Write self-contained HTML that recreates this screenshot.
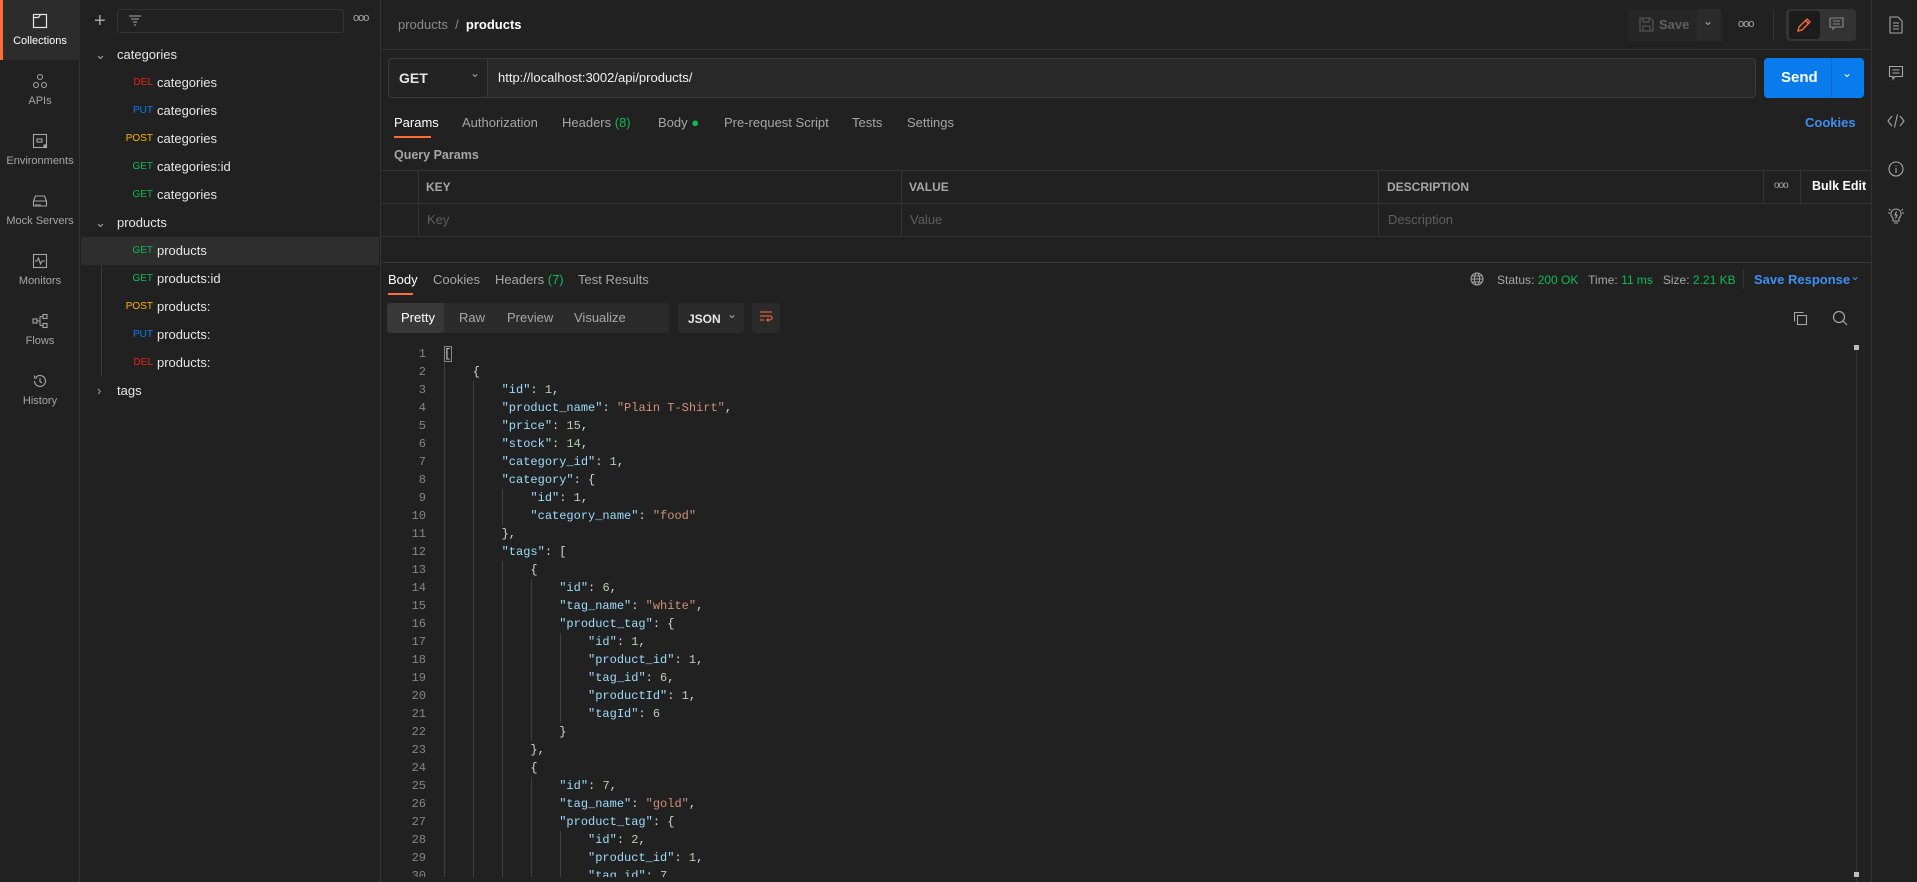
<!DOCTYPE html>
<html><head><meta charset="utf-8"><style>
*{box-sizing:border-box;margin:0;padding:0}
body{width:1917px;height:882px;background:#212121;font-family:"Liberation Sans",sans-serif;color:#a6a6a6;font-size:13px;position:relative;overflow:hidden}
.a{position:absolute;white-space:nowrap}
.nav{position:absolute;left:0;width:80px;text-align:center;font-size:11px;color:#a6a6a6}
.nav svg{display:block;margin:0 auto 6px}
.tree{position:absolute;left:81px;width:298px;height:28px;line-height:28px;font-size:13px;color:#e6e6e6}
.m{position:absolute;right:226px;font-size:10px;top:0}
.nm{position:absolute;left:76px}
.get{color:#0cbb52}.put{color:#097bed}.post{color:#ffb400}.del{color:#eb2013}
.ln{position:absolute;left:390px;width:36px;text-align:right;font-family:"Liberation Mono",monospace;font-size:12px;color:#858585;line-height:18px}
.code{position:absolute;left:444px;top:345px;font-family:"Liberation Mono",monospace;font-size:12px;color:#d4d4d4;white-space:pre;line-height:18px}
.k{color:#9cdcfe}.s{color:#ce9178}.n{color:#b5cea8}
.g{position:absolute;width:1px;background:#404040}
.hl{position:absolute;height:1px;background:#333}
.vl{position:absolute;width:1px;background:#333}
</style></head><body>
<div class="a" style="left:0;top:0;width:80px;height:882px;border-right:1px solid #333"></div>
<div class="a" style="left:0;top:0;width:80px;height:60px;background:#2c2c2c;border-left:3px solid #ff6c37"></div>
<div class="nav" style="top:13px;color:#fff"><svg width="16" height="16" viewBox="0 0 16 16" fill="none" stroke="#e6e6e6" stroke-width="1.2"><rect x="1.5" y="1.5" width="13" height="13"/><path d="M1.5 4.5h5l2-3"/></svg>Collections</div>
<div class="nav" style="top:73px"><svg width="16" height="16" viewBox="0 0 16 16" fill="none" stroke="#a6a6a6" stroke-width="1.1"><circle cx="8" cy="4" r="2.5"/><circle cx="4" cy="12" r="2.5"/><circle cx="12" cy="12" r="2.5"/></svg>APIs</div>
<div class="nav" style="top:133px"><svg width="16" height="16" viewBox="0 0 16 16" fill="none" stroke="#a6a6a6" stroke-width="1.1"><rect x="1.5" y="1.5" width="13" height="13"/><rect x="5" y="6" width="5" height="3"/><rect x="12" y="12" width="2" height="2" fill="#a6a6a6"/></svg>Environments</div>
<div class="nav" style="top:193px"><svg width="16" height="16" viewBox="0 0 16 16" fill="none" stroke="#a6a6a6" stroke-width="1.1"><path d="M1.5 8l2-5h9l2 5v5h-13z M1.5 8h13 M4 11v2 M6 11v2 M8 11v2"/></svg>Mock Servers</div>
<div class="nav" style="top:253px"><svg width="16" height="16" viewBox="0 0 16 16" fill="none" stroke="#a6a6a6" stroke-width="1.1"><rect x="1.5" y="1.5" width="13" height="13"/><path d="M3 8h2l1.5-3 2 6 1.5-3h3"/></svg>Monitors</div>
<div class="nav" style="top:313px"><svg width="16" height="16" viewBox="0 0 16 16" fill="none" stroke="#a6a6a6" stroke-width="1.1"><rect x="1" y="6" width="4" height="4"/><rect x="11" y="1.5" width="4" height="4"/><rect x="11" y="10.5" width="4" height="4"/><path d="M5 8h3M8 3.5v9M8 3.5h3M8 12.5h3"/></svg>Flows</div>
<div class="nav" style="top:373px"><svg width="16" height="16" viewBox="0 0 16 16" fill="none" stroke="#a6a6a6" stroke-width="1.1"><path d="M2.5 8a5.5 5.5 0 1 0 1.6-3.9M2.5 2.5v2.5H5M8 5v3.5l2 1.5"/></svg>History</div>

<div class="a" style="left:380px;top:0;width:1px;height:882px;background:#333"></div>
<div class="a" style="left:94px;top:12px;font-size:20px;color:#a6a6a6;line-height:18px">+</div>
<div class="a" style="left:117px;top:9px;width:227px;height:24px;border:1px solid #333;border-radius:3px"></div>
<svg class="a" style="left:128px;top:14px" width="14" height="14" viewBox="0 0 14 14" stroke="#a6a6a6" stroke-width="1"><path d="M1 2h12M3 5h8M5 8h4M6 11h2"/></svg>
<div class="a" style="left:353px;top:12px;font-size:11px;letter-spacing:-1px">ooo</div>
<div class="a" style="left:101px;top:237px;width:1px;height:139px;background:#3a3a3a"></div>
<div class="tree" style="top:41px"><span style="position:absolute;left:14px;color:#a6a6a6">⌄</span><span style="position:absolute;left:36px">categories</span></div>
<div class="tree" style="top:69px"><span class="m del">DEL</span><span class="nm">categories</span></div>
<div class="tree" style="top:97px"><span class="m put">PUT</span><span class="nm">categories</span></div>
<div class="tree" style="top:125px"><span class="m post">POST</span><span class="nm">categories</span></div>
<div class="tree" style="top:153px"><span class="m get">GET</span><span class="nm">categories:id</span></div>
<div class="tree" style="top:181px"><span class="m get">GET</span><span class="nm">categories</span></div>
<div class="tree" style="top:209px"><span style="position:absolute;left:14px;color:#a6a6a6">⌄</span><span style="position:absolute;left:36px">products</span></div>
<div class="tree" style="top:237px;background:#2e2e2e"><span class="m get">GET</span><span class="nm">products</span></div>
<div class="tree" style="top:265px"><span class="m get">GET</span><span class="nm">products:id</span></div>
<div class="tree" style="top:293px"><span class="m post">POST</span><span class="nm">products:</span></div>
<div class="tree" style="top:321px"><span class="m put">PUT</span><span class="nm">products:</span></div>
<div class="tree" style="top:349px"><span class="m del">DEL</span><span class="nm">products:</span></div>
<div class="tree" style="top:377px"><span style="position:absolute;left:16px;color:#a6a6a6">›</span><span style="position:absolute;left:36px">tags</span></div>

<div class="a" style="left:398px;top:17px;font-size:13px;color:#8a8a8a">products &nbsp;/&nbsp; <span style="color:#fff;font-weight:bold">products</span></div>
<div class="hl" style="left:381px;top:49px;width:1490px"></div>
<div class="a" style="left:1628px;top:9px;width:93px;height:32px;background:#262626;border-radius:3px"></div>
<div class="a" style="left:1697px;top:9px;width:24px;height:32px;background:#2b2b2b"></div>
<svg class="a" style="left:1639px;top:17px" width="15" height="15" viewBox="0 0 15 15" fill="none" stroke="#5a5a5a" stroke-width="1.1"><path d="M1 1h10l3 3v10H1z M4 1v4h6V1 M4 14V9h7v5"/></svg>
<div class="a" style="left:1659px;top:17px;font-weight:bold;color:#5f5f5f">Save</div>
<div class="a" style="left:1703px;top:14px;color:#a6a6a6;font-size:12px">⌄</div>
<div class="a" style="left:1738px;top:18px;font-size:11px;letter-spacing:-1px">ooo</div>
<div class="vl" style="left:1773px;top:10px;height:30px"></div>
<div class="a" style="left:1786px;top:9px;width:70px;height:32px;background:#333;border-radius:4px"></div>
<div class="a" style="left:1789px;top:11px;width:31px;height:28px;background:#1c1c1c;border-radius:3px"></div>
<svg class="a" style="left:1797px;top:17px" width="15" height="15" viewBox="0 0 15 15" fill="none" stroke="#ff6c37" stroke-width="1.3"><path d="M1 14l1-4 8-8 3 3-8 8z M8.5 3.5l3 3"/></svg>
<svg class="a" style="left:1829px;top:17px" width="15" height="14" viewBox="0 0 15 14" fill="none" stroke="#8a8a8a" stroke-width="1.1"><path d="M1 1h13v9H6l-2 2v-2H1z M4 4h7M4 7h7"/></svg>

<!-- right bar -->
<div class="a" style="left:1871px;top:0;width:1px;height:882px;background:#333"></div>
<svg class="a" style="left:1888px;top:16px" width="16" height="18" viewBox="0 0 16 18" fill="none" stroke="#a6a6a6" stroke-width="1.1"><path d="M2 1h8l4 4v12H2z M5 7h6M5 10h6M5 13h6"/></svg>
<svg class="a" style="left:1888px;top:65px" width="16" height="16" viewBox="0 0 16 16" fill="none" stroke="#a6a6a6" stroke-width="1.1"><path d="M1.5 1.5h13v10H7l-2 2.5v-2.5H1.5z M4.5 5h7M4.5 8h7"/></svg>
<svg class="a" style="left:1887px;top:113px" width="18" height="16" viewBox="0 0 18 16" fill="none" stroke="#a6a6a6" stroke-width="1.1"><path d="M5 3L1 8l4 5M13 3l4 5-4 5M10.5 1.5l-3 13"/></svg>
<svg class="a" style="left:1888px;top:161px" width="16" height="16" viewBox="0 0 16 16" fill="none" stroke="#a6a6a6" stroke-width="1.1"><circle cx="8" cy="8" r="7"/><path d="M8 7v5M8 4.5v1"/></svg>
<svg class="a" style="left:1887px;top:207px" width="18" height="18" viewBox="0 0 18 18" fill="none" stroke="#a6a6a6" stroke-width="1.1"><path d="M9 2a5 5 0 0 0-3 9v3h6v-3a5 5 0 0 0-3-9z M7 16h4 M9.5 4.5L8 8h2l-1.5 3.5 M1 6h2M15 6h2M2 2l1.5 1.5M16 2l-1.5 1.5"/></svg>

<!-- url -->
<div class="a" style="left:388px;top:58px;width:1368px;height:40px;border:1px solid #3a3a3a;border-radius:4px;background:#282828"></div>
<div class="a" style="left:388px;top:58px;width:100px;height:40px;border:1px solid #3a3a3a;border-radius:4px 0 0 4px;background:#232323"></div>
<div class="a" style="left:399px;top:70px;font-weight:bold;color:#e6e6e6;font-size:14px">GET</div>
<div class="a" style="left:470px;top:66px;color:#a6a6a6;font-size:12px">⌄</div>
<div class="a" style="left:498px;top:70px;color:#f0f0f0;font-size:13px">http://localhost:3002/api/products/</div>
<div class="a" style="left:1764px;top:58px;width:100px;height:40px;background:#097bed;border-radius:4px"></div>
<div class="vl" style="left:1831px;top:58px;height:40px;background:#0a6ad0"></div>
<div class="a" style="left:1781px;top:69px;color:#fff;font-weight:bold;font-size:15px">Send</div>
<div class="a" style="left:1842px;top:66px;color:#fff;font-size:12px">⌄</div>

<!-- tabs -->
<div class="a" style="left:394px;top:115px;color:#fff">Params</div>
<div class="a" style="left:394px;top:136px;width:37px;height:2px;background:#ff6c37"></div>
<div class="a" style="left:462px;top:115px">Authorization</div>
<div class="a" style="left:562px;top:115px">Headers <span style="color:#0cbb52">(8)</span></div>
<div class="a" style="left:658px;top:115px">Body <span style="color:#0cbb52">●</span></div>
<div class="a" style="left:724px;top:115px">Pre-request Script</div>
<div class="a" style="left:852px;top:115px">Tests</div>
<div class="a" style="left:907px;top:115px">Settings</div>
<div class="a" style="left:1805px;top:115px;color:#3d8ff2;font-weight:bold">Cookies</div>
<div class="a" style="left:394px;top:148px;font-weight:bold;color:#a6a6a6;font-size:12.5px">Query Params</div>

<!-- table -->
<div class="hl" style="left:381px;top:170px;width:1490px"></div>
<div class="hl" style="left:381px;top:203px;width:1490px"></div>
<div class="hl" style="left:381px;top:236px;width:1490px"></div>
<div class="vl" style="left:418px;top:170px;height:66px"></div>
<div class="vl" style="left:901px;top:170px;height:66px"></div>
<div class="vl" style="left:1378px;top:170px;height:66px"></div>
<div class="vl" style="left:1763px;top:170px;height:33px"></div>
<div class="vl" style="left:1800px;top:170px;height:33px"></div>
<div class="a" style="left:426px;top:180px;font-weight:bold;font-size:12px;color:#a6a6a6">KEY</div>
<div class="a" style="left:909px;top:180px;font-weight:bold;font-size:12px;color:#a6a6a6">VALUE</div>
<div class="a" style="left:1387px;top:180px;font-weight:bold;font-size:12px;color:#a6a6a6">DESCRIPTION</div>
<div class="a" style="left:1774px;top:180px;font-size:10px;letter-spacing:-1px;color:#a6a6a6">ooo</div>
<div class="a" style="left:1812px;top:179px;font-weight:bold;color:#fff;font-size:12.5px">Bulk Edit</div>
<div class="a" style="left:427px;top:212px;color:#5f5f5f">Key</div>
<div class="a" style="left:910px;top:212px;color:#5f5f5f">Value</div>
<div class="a" style="left:1388px;top:212px;color:#5f5f5f">Description</div>

<!-- response -->
<div class="hl" style="left:381px;top:262px;width:1490px;background:#383838"></div>
<div class="a" style="left:388px;top:272px;color:#fff">Body</div>
<div class="a" style="left:388px;top:293px;width:25px;height:2px;background:#ff6c37"></div>
<div class="a" style="left:433px;top:272px">Cookies</div>
<div class="a" style="left:495px;top:272px">Headers <span style="color:#0cbb52">(7)</span></div>
<div class="a" style="left:578px;top:272px">Test Results</div>
<svg class="a" style="left:1470px;top:272px" width="14" height="14" viewBox="0 0 14 14" fill="none" stroke="#a6a6a6" stroke-width="1"><circle cx="7" cy="7" r="6"/><ellipse cx="7" cy="7" rx="2.5" ry="6"/><path d="M1 7h12M2 4h10M2 10h10"/></svg>
<div class="a" style="left:1497px;top:273px;font-size:12px">Status: <span style="color:#0cbb52">200 OK</span> &nbsp; Time: <span style="color:#0cbb52">11 ms</span> &nbsp; Size: <span style="color:#0cbb52">2.21 KB</span></div>
<div class="vl" style="left:1743px;top:269px;height:20px"></div>
<div class="a" style="left:1754px;top:272px;color:#3d8ff2;font-weight:bold">Save Response</div>
<div class="a" style="left:1850px;top:269px;color:#3d8ff2;font-size:12px">⌄</div>
<div class="a" style="left:387px;top:303px;width:282px;height:30px;background:#2b2b2b;border-radius:3px"></div>
<div class="a" style="left:387px;top:303px;width:57px;height:30px;background:#383838;border-radius:3px"></div>
<div class="a" style="left:401px;top:310px;color:#fff">Pretty</div>
<div class="a" style="left:459px;top:310px">Raw</div>
<div class="a" style="left:507px;top:310px">Preview</div>
<div class="a" style="left:574px;top:310px">Visualize</div>
<div class="a" style="left:678px;top:303px;width:66px;height:30px;background:#2b2b2b;border-radius:3px"></div>
<div class="a" style="left:688px;top:312px;font-size:12px;color:#e6e6e6;font-weight:bold">JSON</div>
<div class="a" style="left:727px;top:307px;font-size:12px">⌄</div>
<div class="a" style="left:712px;top:303px"></div>
<div class="a" style="left:752px;top:303px;width:28px;height:30px;background:#2b2b2b;border-radius:3px"></div>
<svg class="a" style="left:759px;top:310px" width="14" height="14" viewBox="0 0 14 14" fill="none" stroke="#ff6c37" stroke-width="1.1"><path d="M1 2h12M1 6h10a2 2 0 0 1 0 4H8M9.5 8.5L8 10l1.5 1.5M1 10h4"/></svg>
<svg class="a" style="left:1793px;top:311px" width="15" height="15" viewBox="0 0 15 15" fill="none" stroke="#a6a6a6" stroke-width="1.1"><rect x="4.5" y="4.5" width="9" height="9"/><path d="M1.5 10.5v-9h9"/></svg>
<svg class="a" style="left:1832px;top:310px" width="16" height="16" viewBox="0 0 16 16" fill="none" stroke="#a6a6a6" stroke-width="1.2"><circle cx="7" cy="7" r="5.5"/><path d="M11 11l4 4"/></svg>

<!-- code -->
<div class="a" style="left:1854px;top:345px;width:5px;height:5px;background:#bbb"></div>
<div class="a" style="left:1856px;top:350px;width:1px;height:532px;background:#333"></div>
<div class="a" style="left:1854px;top:872px;width:5px;height:5px;background:#bbb"></div>
<div class="a" style="left:381px;top:0;width:0;height:0"></div>
<div class="a" style="left:444px;top:346px;width:8px;height:16px;border:1px solid #888"></div>
<div class="g" style="left:444px;top:363px;height:514px"></div>
<div class="g" style="left:473px;top:381px;height:496px"></div>
<div class="g" style="left:502px;top:489px;height:36px"></div>
<div class="g" style="left:502px;top:561px;height:316px"></div>
<div class="g" style="left:531px;top:579px;height:162px"></div>
<div class="g" style="left:531px;top:777px;height:100px"></div>
<div class="g" style="left:560px;top:633px;height:90px"></div>
<div class="g" style="left:560px;top:831px;height:46px"></div>
<div style="position:absolute;left:0;top:0;width:1917px;height:877px;overflow:hidden">
<div class="ln" style="top:345px">1<br>2<br>3<br>4<br>5<br>6<br>7<br>8<br>9<br>10<br>11<br>12<br>13<br>14<br>15<br>16<br>17<br>18<br>19<br>20<br>21<br>22<br>23<br>24<br>25<br>26<br>27<br>28<br>29<br>30</div>
<div class="code">[
    {
        <span class="k">"id"</span>: <span class="n">1</span>,
        <span class="k">"product_name"</span>: <span class="s">"Plain T-Shirt"</span>,
        <span class="k">"price"</span>: <span class="n">15</span>,
        <span class="k">"stock"</span>: <span class="n">14</span>,
        <span class="k">"category_id"</span>: <span class="n">1</span>,
        <span class="k">"category"</span>: {
            <span class="k">"id"</span>: <span class="n">1</span>,
            <span class="k">"category_name"</span>: <span class="s">"food"</span>
        },
        <span class="k">"tags"</span>: [
            {
                <span class="k">"id"</span>: <span class="n">6</span>,
                <span class="k">"tag_name"</span>: <span class="s">"white"</span>,
                <span class="k">"product_tag"</span>: {
                    <span class="k">"id"</span>: <span class="n">1</span>,
                    <span class="k">"product_id"</span>: <span class="n">1</span>,
                    <span class="k">"tag_id"</span>: <span class="n">6</span>,
                    <span class="k">"productId"</span>: <span class="n">1</span>,
                    <span class="k">"tagId"</span>: <span class="n">6</span>
                }
            },
            {
                <span class="k">"id"</span>: <span class="n">7</span>,
                <span class="k">"tag_name"</span>: <span class="s">"gold"</span>,
                <span class="k">"product_tag"</span>: {
                    <span class="k">"id"</span>: <span class="n">2</span>,
                    <span class="k">"product_id"</span>: <span class="n">1</span>,
                    <span class="k">"tag_id"</span>: <span class="n">7</span>,</div>
</div>
</body></html>
